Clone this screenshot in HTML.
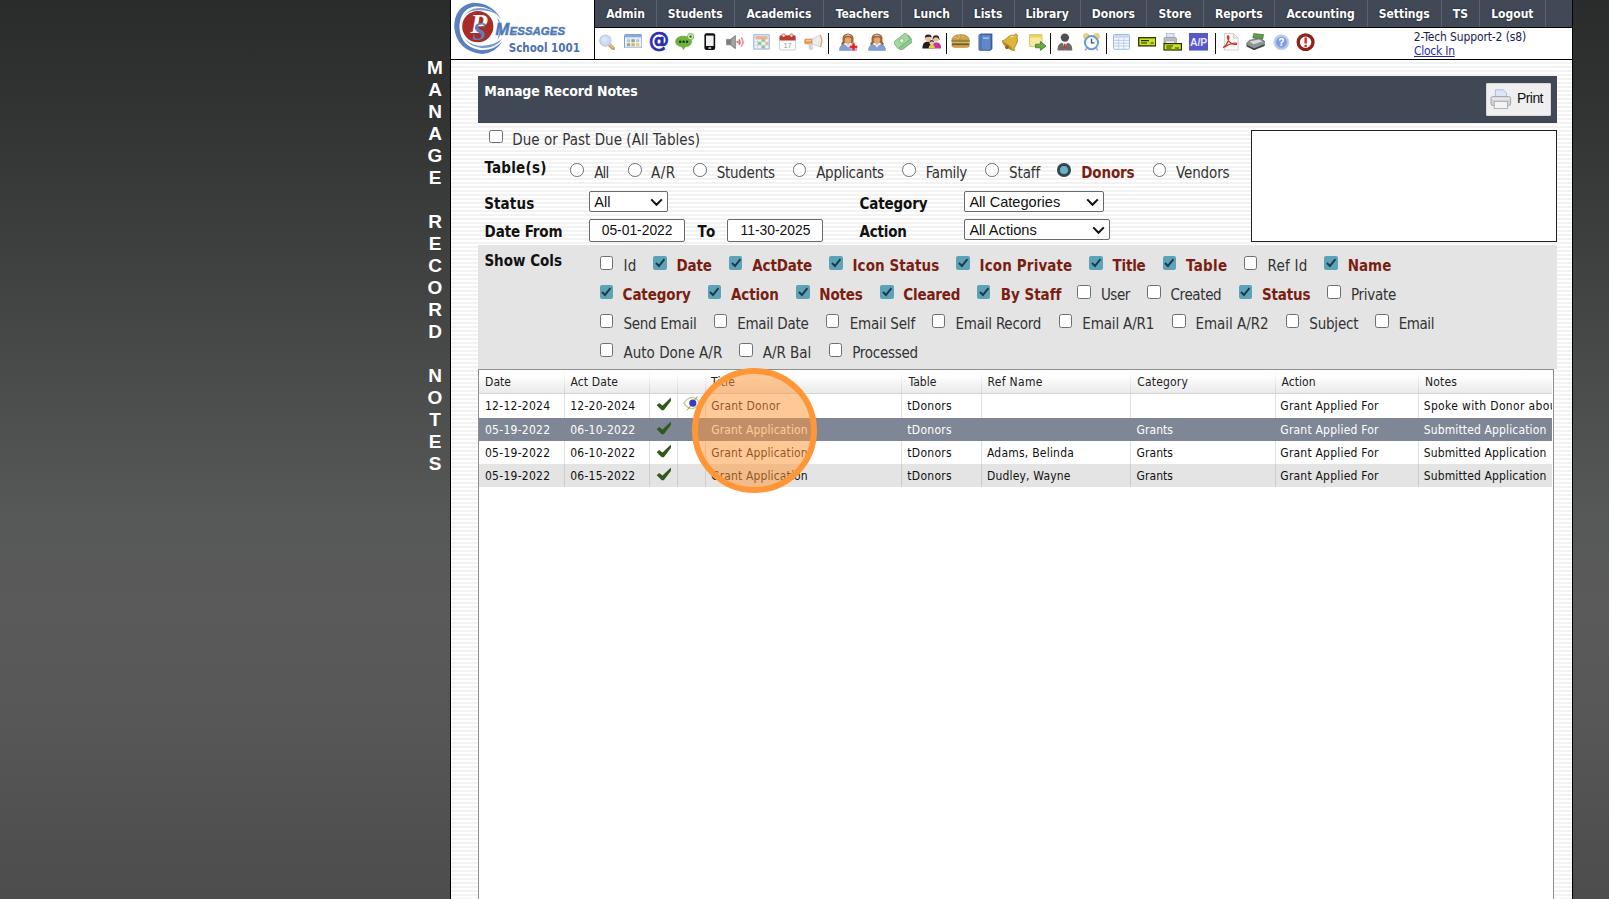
<!DOCTYPE html>
<html lang="en"><head><meta charset="utf-8"><title>Manage Record Notes</title>
<style>
html,body{margin:0;padding:0}
body{width:1609px;height:899px;overflow:hidden;position:relative;font-family:"DejaVu Sans Condensed","Liberation Sans",sans-serif;
background:linear-gradient(to bottom,#2a2b2b 0,#303131 90px,#3e3f3f 250px,#4c4d4d 400px,#575858 520px,#5a5a5a 610px,#575757 720px,#505050 830px,#4d4d4d 899px)}
.t{position:absolute;white-space:nowrap}
.vt{position:absolute;left:420px;width:30px;text-align:center;color:#fff;font:bold 19px/22px "Liberation Sans",sans-serif}
#page{position:absolute;left:450px;top:0;width:1121px;height:899px;border-left:1px solid #000;border-right:1px solid #000;
background:repeating-linear-gradient(to bottom,#fff 0,#fff 2px,#f2f2f2 2px,#f2f2f2 4px)}
#hdr{position:absolute;left:451px;top:0;width:1121px;height:59px;background:#fff;border-bottom:1px solid #000}
#logo{position:absolute;left:451px;top:0;width:143px;height:59px;border-right:1px solid #000;overflow:hidden}
#nav{position:absolute;left:595px;top:0;width:977px;height:27px;background:#414856;border-bottom:1px solid #000}
.ni{position:absolute;top:0;height:27px;border-right:1px solid #5a616f;color:#fff;font-weight:bold;font-size:12px;line-height:28px;text-align:center;text-shadow:0 0 2px #1a1e28}
#tool{position:absolute;left:595px;top:28px;width:977px;height:30px}
#tool svg{position:absolute}
.sp{position:absolute;top:5px;width:1.5px;height:21px;background:#111}
#tbar{position:absolute;left:478px;top:76px;width:1079px;height:46.7px;background:#414855}
#print{position:absolute;left:1485.5px;top:82.7px;width:65px;height:33.5px;background:#efefef;border-radius:2px;box-shadow:inset 0 0 0 1px #d9d9d9}
#print svg{position:absolute;left:4.6px;top:6.4px}
.cb{position:absolute;width:11.4px;height:11.4px;border:1px solid #6f6f6f;border-radius:2.5px;background:#fff}
.cb.on{border:0;width:13.4px;height:13.4px;background:#5da3b7;border-radius:2px}
.cb svg{position:absolute;left:1.5px;top:2px}
.rb{position:absolute;width:11.6px;height:11.6px;border:1px solid #6f6f6f;border-radius:50%;background:#fff}
.rb.on{width:7.6px;height:7.6px;border:3px solid #2f4954;background:#6cb1c3}
.sel{position:absolute;box-sizing:border-box;border:1px solid #6a6a6a;border-radius:2px;background:#fff}
.inp{position:absolute;box-sizing:border-box;border:1px solid #6a6a6a;border-radius:2px;background:#fff}
#ta{position:absolute;left:1251px;top:129.5px;width:304px;height:110.5px;border:1px solid #222;background:#fff}
#cols{position:absolute;left:478px;top:245.2px;width:1079px;height:123.8px;background:#e4e4e4}
#grid{position:absolute;left:478px;top:369px;width:1074px;height:540px;border:1px solid #8f8f8f;background:#fff}
#gh{position:absolute;background:linear-gradient(to bottom,#fff 0,#fdfdfd 35%,#f3f3f3 65%,#ebebeb 100%);border-bottom:1px solid #d6d6d6}
.gr{position:absolute;left:479px;width:1073px;background:#fff}
.gr.alt{background:#e4e4e4}
.gr.selr{background:#7f8796}
.gs{position:absolute;width:1px;background:rgba(170,170,170,.38)}
.gs.h{background:linear-gradient(to bottom,rgba(255,255,255,.9),rgba(200,200,200,.7))}
.ck{position:absolute}
#circle{position:absolute;left:692px;top:368px;width:113px;height:113px;border:6px solid #ff9739;border-radius:50%;background:rgba(255,150,56,.52)}
</style></head>
<body>
<span class="vt" style="top:57px">M</span><span class="vt" style="top:79px">A</span><span class="vt" style="top:101px">N</span><span class="vt" style="top:123px">A</span><span class="vt" style="top:145px">G</span><span class="vt" style="top:167px">E</span><span class="vt" style="top:211px">R</span><span class="vt" style="top:233px">E</span><span class="vt" style="top:255px">C</span><span class="vt" style="top:277px">O</span><span class="vt" style="top:299px">R</span><span class="vt" style="top:321px">D</span><span class="vt" style="top:365px">N</span><span class="vt" style="top:387px">O</span><span class="vt" style="top:409px">T</span><span class="vt" style="top:431px">E</span><span class="vt" style="top:453px">S</span>
<div id="page"></div>
<div id="hdr"></div>
<div id="logo"><svg width="143" height="59" viewBox="451 0 143 59" style="position:absolute;left:0;top:0"><path d="M501 19 Q492 3 473 2.8 Q454.5 6 454.2 27 Q456.5 51 482 54 Q496 53 502.5 41 Q494 51 480 50 Q460.5 47 459.4 27 Q460 9.5 474.5 6.6 Q490 5 501 19Z" fill="#5b80bf"/><path d="M498.5 15 Q487 5.8 473.5 8.8 Q462 12.6 461 26 Q461.4 12 475 10.4 Q488 9 498.5 15Z" fill="#7a9ad0"/><path d="M502.5 38.5 Q496 48.4 482.5 48.2 Q470 46.8 464.6 39 Q472 46 482.4 45.8 Q495 45 502.5 38.5Z" fill="#7a9ad0"/><path d="M496.6 17 Q501.4 22.6 501.4 28.5 Q501.4 34.6 497.4 39.6 Q499.6 34 499.6 28.5 Q499.6 22.6 496.6 17Z" fill="#6f90c9"/><circle cx="477.8" cy="26.6" r="15.6" fill="#a92c28"/><text x="470.4" y="33" font-family="Liberation Serif,serif" font-style="italic" font-weight="bold" font-size="27.5" fill="#fff">P</text><text x="472.4" y="39.6" font-family="Liberation Serif,serif" font-style="italic" font-weight="bold" font-size="25" fill="#5b80bf">S</text><text x="495.5" y="35.4" font-family="Liberation Sans,sans-serif" font-style="italic" font-weight="bold" font-size="16.5" fill="#4f79ba" stroke="#4f79ba" stroke-width=".5">M</text><text x="509.6" y="35.4" font-family="Liberation Sans,sans-serif" font-style="italic" font-weight="bold" font-size="11.6" fill="#4f79ba" stroke="#4f79ba" stroke-width=".45" textLength="55.5" lengthAdjust="spacingAndGlyphs">ESSAGES</text><text x="508.7" y="52.2" font-family="DejaVu Sans Condensed,Liberation Sans,sans-serif" font-weight="bold" font-size="12" fill="#4a70b0" textLength="71.3" lengthAdjust="spacingAndGlyphs">School 1001</text></svg></div>
<div id="nav"><span class="ni" style="left:0.0px;width:61.0px">Admin</span><span class="ni" style="left:61.4px;width:77.7px">Students</span><span class="ni" style="left:139.5px;width:88.8px">Academics</span><span class="ni" style="left:228.7px;width:77.6px">Teachers</span><span class="ni" style="left:306.7px;width:60.2px">Lunch</span><span class="ni" style="left:367.3px;width:51.5px">Lists</span><span class="ni" style="left:419.2px;width:65.7px">Library</span><span class="ni" style="left:485.3px;width:66.2px">Donors</span><span class="ni" style="left:551.9px;width:56.3px">Store</span><span class="ni" style="left:608.6px;width:70.4px">Reports</span><span class="ni" style="left:679.4px;width:92.3px">Accounting</span><span class="ni" style="left:772.1px;width:74.2px">Settings</span><span class="ni" style="left:846.7px;width:37.4px">TS</span><span class="ni" style="left:884.5px;width:65.7px">Logout</span></div>
<div id="tool"><svg style="left:3.7px;top:5.5px" width="16.6" height="16.0" viewBox="0 0 16.6 16.0"><path d="M10 10.4 L14.2 14.4" stroke="#c8a662" stroke-width="3.6" stroke-linecap="round"/><path d="M10.4 10 L14 13.4" stroke="#e3cf9a" stroke-width="1.1" stroke-linecap="round"/><circle cx="6.4" cy="6.6" r="5.6" fill="#cfdaf1" stroke="#b9c8e6" stroke-width="1.2"/><circle cx="5.6" cy="5.6" r="2.6" fill="#dde6f6"/></svg><svg style="left:28.6px;top:6.0px" width="18.4" height="14.4" viewBox="0 0 18.4 14.4"><rect x="0.5" y="0.5" width="17.4" height="13.6" rx="1" fill="#f2f6fc" stroke="#7f9dce"/><rect x="1" y="1" width="16.4" height="2.4" fill="#8aa8da"/><rect x="1" y="3.2" width="16.4" height="1" fill="#c5d6f0"/><rect x="1" y="12.6" width="16.4" height="1.2" fill="#b4c8ea"/><rect x="2.8" y="5.2" width="3.4" height="3" fill="#aec5e8"/><rect x="7.4" y="5.2" width="3.4" height="3" fill="#8fa872"/><rect x="12" y="5.2" width="3.4" height="3" fill="#aecbe8"/><rect x="2.8" y="9.2" width="3.4" height="3" fill="#90b47c"/><rect x="7.4" y="9.2" width="3.4" height="3" fill="#e3a674"/><rect x="12" y="9.2" width="3.4" height="3" fill="#ecc972"/></svg><svg style="left:52.9px;top:3.0px" width="22.1" height="22.0" viewBox="0 0 22.1 22.0"><text x="11" y="15.8" text-anchor="middle" font-family="DejaVu Sans,Liberation Sans,sans-serif" font-weight="bold" font-size="20.4" fill="#2b2eae" stroke="#2b2eae" stroke-width=".7">@</text></svg><svg style="left:80.3px;top:4.5px" width="19.3" height="17.0" viewBox="0 0 19.3 17.0"><path d="M8.2 3.2 C3.5 3.2 0.6 5.6 0.6 8.6 C0.6 11.4 3.2 13.4 6.8 13.8 L8.6 16.4 L10.2 13.8 C14.2 13.5 16.6 11.4 16.6 8.6 C16.6 5.6 13.4 3.2 8.2 3.2Z" fill="#6db33c" stroke="#5a9a30" stroke-width=".6"/><circle cx="5.2" cy="8.8" r="1.2" fill="#1d3510"/><circle cx="8.6" cy="8.8" r="1.2" fill="#1d3510"/><circle cx="12" cy="8.8" r="1.2" fill="#1d3510"/><circle cx="15.6" cy="3.6" r="3.1" fill="#d9ecc8" stroke="#6db33c" stroke-width="1"/><circle cx="15.6" cy="3.6" r="1.2" fill="#2f5a1c"/></svg><svg style="left:109.0px;top:5.2px" width="11.8" height="17.4" viewBox="0 0 11.8 17.4"><rect x="0.4" y="0.3" width="10.8" height="16.8" rx="2" fill="#111"/><rect x="2" y="2.6" width="7.6" height="10.4" fill="#f2f2f2"/><rect x="4.3" y="14.3" width="3" height="1.5" rx=".5" fill="#ddd"/></svg><svg style="left:131.3px;top:6.6px" width="19.3" height="14.4" viewBox="0 0 19.3 14.4"><path d="M0.6 4.4 H4.4 L9.4 0.4 V13.8 L4.4 9.8 H0.6Z" fill="#7d7f80" stroke="#666869" stroke-width=".6"/><path d="M5.4 4.6 L8.8 1.8 V12.4 L5.4 9.6Z" fill="#a4a6a7"/><circle cx="11.6" cy="7.1" r="1.1" fill="#d4545a"/><path d="M13 4.4 Q15 7.1 13 9.8" fill="none" stroke="#d9626a" stroke-width="1.5"/><path d="M15.2 2.6 Q18.8 7.1 15.2 11.6" fill="none" stroke="#e58e94" stroke-width="1.6"/></svg><svg style="left:158.2px;top:6.0px" width="17.0" height="15.8" viewBox="0 0 17.0 15.8"><rect x="0.7" y="0.7" width="15.6" height="14.4" rx="1" fill="#f3f6fd" stroke="#b3c0ec" stroke-width="1.5"/><rect x="2.4" y="2.2" width="12.2" height="3.2" fill="#eeb27e"/><path d="M1 7.8 H16 M1 11.2 H16 M4.6 4.8 V15 M8.4 4.8 V15 M12.2 4.8 V15" stroke="#c3d3ee" stroke-width=".9"/><rect x="5" y="8.2" width="3" height="2.6" fill="#8cc47c"/><rect x="8.8" y="5.2" width="3" height="2.4" fill="#8cc47c"/><rect x="8.8" y="11.6" width="3" height="2.8" fill="#8cc47c"/><rect x="12.6" y="8.2" width="3" height="2.6" fill="#f0b27a"/></svg><svg style="left:183.9px;top:5.0px" width="17.3" height="17.6" viewBox="0 0 17.3 17.6"><rect x="0.6" y="2.4" width="15.9" height="14.6" rx="1.4" fill="#fdfdfd" stroke="#c9c9c9" stroke-width=".9"/><path d="M0.6 7.4 V3.8 Q0.6 2.4 2 2.4 H15.1 Q16.5 2.4 16.5 3.8 V7.4Z" fill="#bd3b2a"/><circle cx="4.6" cy="2.6" r="1.7" fill="#f3e6e4" stroke="#a8342a" stroke-width=".7"/><circle cx="12.5" cy="2.6" r="1.7" fill="#f3e6e4" stroke="#a8342a" stroke-width=".7"/><text x="8.6" y="14.6" text-anchor="middle" font-family="Liberation Sans,sans-serif" font-size="7.6" fill="#9a9a9a">17</text></svg><svg style="left:209.0px;top:6.2px" width="19.6" height="16.8" viewBox="0 0 19.6 16.8"><path d="M7 5.4 L16.4 1 Q18.6 7 16.4 13 L7 9.6Z" fill="#ececec" stroke="#c4c4c4" stroke-width=".7"/><path d="M16.2 1 Q19.6 7 16.2 13" fill="none" stroke="#e9a56a" stroke-width="1.3"/><path d="M1 5.2 H8 V9.8 H1 Q0.2 7.5 1 5.2Z" fill="#ef9a4c" stroke="#d07e32" stroke-width=".6"/><path d="M4.6 9.8 H7.8 L8.8 15 Q7 16.4 5.4 15Z" fill="#d9d9d9" stroke="#bdbdbd" stroke-width=".5"/><rect x="2" y="6" width="5" height="1.2" fill="#f9cfa3"/></svg><span class="sp" style="left:232.9px"></span><svg style="left:243.7px;top:4.8px" width="19.0" height="18.1" viewBox="0 0 19.0 18.1"><path d="M3.6 8.6 Q2.2 1.2 9 0.6 Q15.8 1.2 14.4 8.6 Q16.6 10.4 15.4 12.8 Q13 12.2 12.4 10 H5.6 Q5 12.2 2.6 12.8 Q1.4 10.4 3.6 8.6Z" fill="#a7602f"/><path d="M5 3.4 Q9 -0.4 13 3.4 Q9 2 5 3.4Z" fill="#c9c4c4"/><ellipse cx="9" cy="7" rx="3.3" ry="4" fill="#dba878"/><path d="M5.4 5.6 Q6 3 9 3.2 Q12 3 12.6 5.6 Q11 4.2 9 4.4 Q7 4.2 5.4 5.6Z" fill="#8f4d26"/><path d="M0.4 17.4 Q0.4 12.4 5.2 11.6 L9 13.2 L12.8 11.6 Q17.6 12.4 17.6 17.4Z" fill="#7f9fd8" stroke="#6f8fca" stroke-width=".5"/><path d="M6.6 11.4 L9 14.4 L11.4 11.4 L9 10.4Z" fill="#f3f3f3"/><path d="M7.6 10.6 L9 12.6 L10.4 10.6Z" fill="#dba878"/><path d="M13 10 H16 V12.4 H18.6 V15.4 H16 V17.9 H13 V15.4 H10.4 V12.4 H13Z" fill="#d9282a" stroke="#fff" stroke-width=".5"/></svg><svg style="left:272.6px;top:4.8px" width="19.0" height="18.1" viewBox="0 0 19.0 18.1"><path d="M3.6 8.6 Q2.2 1.2 9 0.6 Q15.8 1.2 14.4 8.6 Q16.6 10.4 15.4 12.8 Q13 12.2 12.4 10 H5.6 Q5 12.2 2.6 12.8 Q1.4 10.4 3.6 8.6Z" fill="#a7602f"/><path d="M5 3.4 Q9 -0.4 13 3.4 Q9 2 5 3.4Z" fill="#c9c4c4"/><ellipse cx="9" cy="7" rx="3.3" ry="4" fill="#dba878"/><path d="M5.4 5.6 Q6 3 9 3.2 Q12 3 12.6 5.6 Q11 4.2 9 4.4 Q7 4.2 5.4 5.6Z" fill="#8f4d26"/><path d="M0.4 17.4 Q0.4 12.4 5.2 11.6 L9 13.2 L12.8 11.6 Q17.6 12.4 17.6 17.4Z" fill="#7f9fd8" stroke="#6f8fca" stroke-width=".5"/><path d="M6.6 11.4 L9 14.4 L11.4 11.4 L9 10.4Z" fill="#f3f3f3"/><path d="M7.6 10.6 L9 12.6 L10.4 10.6Z" fill="#dba878"/></svg><svg style="left:298.9px;top:5.2px" width="18.1" height="17.2" viewBox="0 0 18.1 17.2"><g transform="rotate(-38 9 8.6)"><rect x="1.6" y="6.6" width="15.6" height="8" fill="#8cc88a" stroke="#68a866" stroke-width=".7"/><rect x="0.8" y="3.2" width="15.6" height="8" fill="#a5d6a2" stroke="#68a866" stroke-width=".7"/><circle cx="8.6" cy="7.2" r="2.2" fill="#e3f3e2" stroke="#68a866" stroke-width=".6"/></g></svg><svg style="left:326.8px;top:5.8px" width="19.6" height="15.4" viewBox="0 0 19.6 15.4"><circle cx="6.2" cy="4" r="3.2" fill="#e9c19c"/><path d="M2.8 3.8 Q3 0.2 6.4 0.4 Q9.6 0.4 9.6 3.6 Q7.6 1.8 2.8 3.8Z" fill="#2a2320"/><path d="M0.4 14.6 Q0.4 8.6 4.4 7.8 H8.4 Q11.6 8.6 11.6 14.6Z" fill="#1e1e1e"/><circle cx="14" cy="4.8" r="3" fill="#e9c19c"/><path d="M10.6 6.6 Q10 1.2 14 1.2 Q18 1.2 17.4 6.6 Q16.6 3.4 14 3.2 Q11.4 3.4 10.6 6.6Z" fill="#3a2a22"/><path d="M9.6 14.6 Q9.8 9 13 8.4 H15.6 Q19 9 19.2 14.6Z" fill="#c4349a"/><circle cx="9.8" cy="8.8" r="2.4" fill="#eccaa8"/><path d="M7.4 8.4 Q7.6 6 9.8 6 Q12 6 12.2 8.4 Q9.8 6.8 7.4 8.4Z" fill="#4a3526"/><path d="M6.6 14.6 Q6.8 11.4 8.6 11 H11 Q12.8 11.4 13 14.6Z" fill="#e6cf3a"/></svg><span class="sp" style="left:350.7px"></span><svg style="left:356.2px;top:6.2px" width="19.3" height="13.8" viewBox="0 0 19.3 13.8"><path d="M0.8 6.2 Q1.2 0.6 9.6 0.6 Q18 0.6 18.4 6.2Z" fill="#cda246" stroke="#a98030" stroke-width=".5"/><path d="M3 3.4 H5 M7 2.2 H9 M11 2.6 H13 M14 4.2 H15.6 M6 4.4 H7.6" stroke="#ead9a0" stroke-width=".7"/><path d="M0.4 6 H18.8 V7.8 H0.4Z" fill="#7d9434"/><rect x="0.8" y="7.6" width="17.6" height="1" fill="#c9402c"/><rect x="0.8" y="8.5" width="17.6" height=".9" fill="#eccb42"/><rect x="0.8" y="9.3" width="17.6" height="1.8" fill="#6b4a1e"/><path d="M0.8 11 H18.4 Q18.4 13.4 15.6 13.4 H3.6 Q0.8 13.4 0.8 11Z" fill="#cda246" stroke="#a98030" stroke-width=".5"/></svg><svg style="left:383.0px;top:5.2px" width="15.0" height="17.6" viewBox="0 0 15.0 17.6"><path d="M1.6 1.6 L3 0.4 H14.4 V15.8 L13 17.2 H1.6Z" fill="#3d5c9c"/><rect x="1" y="1.6" width="12" height="15.6" rx=".8" fill="#6189c9" stroke="#41609f" stroke-width="1"/><rect x="2.4" y="2" width="1.2" height="14.8" fill="#4a70b4"/><rect x="5" y="4.4" width="6" height="1.5" fill="#a9c0e6"/></svg><svg style="left:407.4px;top:5.0px" width="18.1" height="17.9" viewBox="0 0 18.1 17.9"><g transform="rotate(38 9 9)"><path d="M9 -0.6 Q10.8 -0.6 10.6 1.6 Q14.6 3.2 14.8 9 Q15 12.6 17.4 14.4 H0.6 Q3 12.6 3.2 9 Q3.4 3.2 7.4 1.6 Q7.2 -0.6 9 -0.6Z" fill="#dcb638" stroke="#a98420" stroke-width=".8"/><ellipse cx="9" cy="14.4" rx="6.4" ry="1.7" fill="#b8902a"/><circle cx="9" cy="15.6" r="1.9" fill="#8a6a1c"/><path d="M5.6 5.4 Q6.2 3.6 8 3" stroke="#f4e08c" stroke-width="1.1" fill="none"/></g></svg><svg style="left:434.3px;top:6.0px" width="17.7" height="17.0" viewBox="0 0 17.7 17.0"><path d="M0.6 0.6 H13 V12.4 H0.6Z" fill="#f7e9a0" stroke="#d6bd5a" stroke-width=".9"/><rect x="0.9" y="0.9" width="11.8" height="2.6" fill="#ecd064"/><path d="M6.6 10.2 H11.4 V7.6 L17 12 L11.4 16.4 V13.8 H6.6Z" fill="#6aaa48" stroke="#3f7a2a" stroke-width=".9"/></svg><span class="sp" style="left:454.9px"></span><svg style="left:462.3px;top:5.2px" width="15.9" height="17.6" viewBox="0 0 15.9 17.6"><circle cx="7.9" cy="4.6" r="4.2" fill="#4f4f4f"/><path d="M0.4 17.4 Q0.4 11 4.8 9.8 L7.9 11.4 L11 9.8 Q15.4 11 15.4 17.4Z" fill="#6b6b6b"/><path d="M6.2 10.6 L7.9 17.4 L9.6 10.6 L7.9 9.8Z" fill="#f2f2f2"/><path d="M7.2 10.8 H8.6 L9 15 L7.9 17 L6.8 15Z" fill="#cf2e26"/></svg><svg style="left:487.7px;top:4.9px" width="17.1" height="17.9" viewBox="0 0 17.1 17.9"><circle cx="3.4" cy="3.4" r="2.8" fill="#f3d873" stroke="#d2b04a" stroke-width=".6"/><circle cx="13.6" cy="3.4" r="2.8" fill="#f3d873" stroke="#d2b04a" stroke-width=".6"/><path d="M3.6 15.4 L2.2 17.4 M13.4 15.4 L14.8 17.4" stroke="#9a9a9a" stroke-width="1.4"/><circle cx="8.5" cy="9.6" r="6.6" fill="#f7fafe" stroke="#6c9bd9" stroke-width="2"/><path d="M8.5 5.8 V9.8 H11.4" fill="none" stroke="#37527a" stroke-width="1.3"/></svg><span class="sp" style="left:510.5px"></span><svg style="left:518.0px;top:6.0px" width="17.2" height="15.9" viewBox="0 0 17.2 15.9"><rect x="0.5" y="0.5" width="16" height="14.8" rx=".8" fill="#f5f9fe" stroke="#9db8e4"/><rect x="1.2" y="1.2" width="14.6" height="2.6" fill="#c3d6f2"/><path d="M1 6.4 H16 M1 9.2 H16 M1 12 H16 M5.6 4 V15 M10.8 4 V15" stroke="#b4c9ea" stroke-width=".9"/></svg><svg style="left:542.8px;top:8.8px" width="18.4" height="9.8" viewBox="0 0 18.4 9.8"><rect x="0.7" y="0.7" width="17" height="8.2" fill="#c9e21e" stroke="#2b3208" stroke-width="1.3"/><path d="M3 3.6 H11 M3 6 H9 M12.6 6 H15.6" stroke="#2b3208" stroke-width="1.1"/></svg><svg style="left:567.7px;top:5.2px" width="19.3" height="17.6" viewBox="0 0 19.3 17.6"><rect x="3.4" y="0.6" width="7.6" height="4.4" fill="#dfe9f6" stroke="#9fb2cc" stroke-width=".7"/><rect x="1" y="4.4" width="12.4" height="6.6" rx="1" fill="#b9bcc0" stroke="#8c8f93" stroke-width=".7"/><rect x="2.6" y="8" width="9" height="3.6" fill="#eee" stroke="#9a9a9a" stroke-width=".5"/><rect x="1" y="10.6" width="17.4" height="6.4" fill="#c9e21e" stroke="#2b3208" stroke-width="1.2"/><path d="M3.4 13 H10 M3.4 15 H8.4 M12 15 H16" stroke="#2b3208" stroke-width="1"/></svg><svg style="left:593.8px;top:5.2px" width="19.2" height="17.6" viewBox="0 0 19.2 17.6"><rect x="0" y="0" width="19.2" height="17.6" fill="#5558c8"/><text x="9.6" y="13" text-anchor="middle" font-family="Liberation Sans,sans-serif" font-weight="bold" font-size="11" fill="#e6e6ff" textLength="17.4" lengthAdjust="spacingAndGlyphs">A/P</text></svg><span class="sp" style="left:619.5px"></span><svg style="left:626.8px;top:5.0px" width="17.1" height="17.8" viewBox="0 0 17.1 17.8"><path d="M2.4 0.5 H11.4 L16.2 5.2 V17.1 H2.4Z" fill="#fbfbfb" stroke="#c8c8c8" stroke-width=".8"/><path d="M11.4 0.5 V5.2 H16.2Z" fill="#e4e4e4" stroke="#c8c8c8" stroke-width=".6"/><path d="M1.2 14.6 Q5.4 11.6 6.8 5.6 Q7.2 2.8 6 2.8 Q4.8 3 6 6.4 Q8 11 13.6 11.6 Q15.6 11.2 14.2 10.2 Q10 9.4 1.2 14.6Z" fill="none" stroke="#d13426" stroke-width="1.3"/></svg><svg style="left:651.2px;top:5.2px" width="19.3" height="17.6" viewBox="0 0 19.3 17.6"><path d="M7.6 0.6 L17.6 1.6 L16.8 6 L6.8 5Z" fill="#5f9e46" stroke="#3d6b2c" stroke-width=".6"/><path d="M3.2 7.4 L13.6 5 L18.4 8 L18.4 12.6 L8 16.8 L0.8 13 L0.8 10Z" fill="#8d9494" stroke="#5a6060" stroke-width=".7"/><path d="M3.6 8.4 L13 6.4 L16.4 8.6 L7.4 11.2Z" fill="#d5d9d9"/><path d="M0.8 12.6 L8 16.2 L18.4 12" fill="none" stroke="#3f4545" stroke-width="1.4"/></svg><svg style="left:678.0px;top:5.6px" width="17.0" height="16.6" viewBox="0 0 17.0 16.6"><circle cx="8.4" cy="8.3" r="7.6" fill="#b4c6ea" stroke="#cfdaf0" stroke-width="1"/><circle cx="8.4" cy="8.3" r="5.4" fill="#7f9edb"/><text x="8.4" y="12" text-anchor="middle" font-family="Liberation Sans,sans-serif" font-weight="bold" font-size="10" fill="#fff">?</text></svg><svg style="left:700.6px;top:4.6px" width="19.4" height="18.4" viewBox="0 0 19.4 18.4"><circle cx="9.6" cy="9.2" r="7.4" fill="#fff" stroke="#8c241a" stroke-width="3.3"/><rect x="8.5" y="4.4" width="2.3" height="6.2" fill="#c8281e"/><rect x="8.5" y="11.8" width="2.3" height="2.2" fill="#c8281e"/></svg></div>
<div id="tbar"></div>
<div id="print"><svg width="22" height="21" viewBox="0 0 22 21"><path d="M5.4 0.8 H13 L16.4 4 V8.6 H5.4Z" fill="#dbe7f7" stroke="#9fb3d0" stroke-width=".8"/><rect x="1" y="7.6" width="19.6" height="9" rx="2" fill="#d2d4d8" stroke="#9b9ea4" stroke-width=".9"/><rect x="4.2" y="12.4" width="13.2" height="7.2" fill="#f4f4f4" stroke="#a6a6a6" stroke-width=".8"/><rect x="2" y="8.6" width="17.6" height="2" fill="#e9eaec"/></svg></div>
<span class="cb" style="left:489.2px;top:130.0px"></span>
<span class="rb" style="left:570.4px;top:163.0px"></span>
<span class="rb" style="left:628.0px;top:163.0px"></span>
<span class="rb" style="left:693.2px;top:163.0px"></span>
<span class="rb" style="left:792.8px;top:163.0px"></span>
<span class="rb" style="left:902.0px;top:163.0px"></span>
<span class="rb" style="left:985.2px;top:163.0px"></span>
<span class="rb on" style="left:1057.2px;top:163.0px"></span>
<span class="rb" style="left:1152.8px;top:163.0px"></span>
<div class="sel" style="left:589.1px;top:191.0px;width:78.9px;height:20.8px"><svg width="13" height="9" viewBox="0 0 13 9" style="position:absolute;right:4.2px;top:5.6px"><path d="M1.2 1.4 L6.5 6.8 L11.8 1.4" fill="none" stroke="#111" stroke-width="2"/></svg></div>
<div class="sel" style="left:964.3px;top:191.0px;width:139.4px;height:20.8px"><svg width="13" height="9" viewBox="0 0 13 9" style="position:absolute;right:4.2px;top:5.6px"><path d="M1.2 1.4 L6.5 6.8 L11.8 1.4" fill="none" stroke="#111" stroke-width="2"/></svg></div>
<div class="sel" style="left:964.3px;top:219.0px;width:145.4px;height:20.5px"><svg width="13" height="9" viewBox="0 0 13 9" style="position:absolute;right:4.2px;top:5.6px"><path d="M1.2 1.4 L6.5 6.8 L11.8 1.4" fill="none" stroke="#111" stroke-width="2"/></svg></div>
<div class="inp" style="left:589.1px;top:219.2px;width:95.8px;height:22.5px"></div>
<div class="inp" style="left:727.2px;top:219.2px;width:96.3px;height:22.5px"></div>
<div id="ta"></div>
<div id="cols"></div>
<span class="cb" style="left:599.8px;top:256.3px"></span>
<span class="cb on" style="left:653.2px;top:256.3px"><svg width="10.4" height="9.4" viewBox="0 0 11 9.4" preserveAspectRatio="none"><path d="M1 5 L4.2 8 L10 1.2" fill="none" stroke="#1e3846" stroke-width="2"/></svg></span>
<span class="cb on" style="left:729.0px;top:256.3px"><svg width="10.4" height="9.4" viewBox="0 0 11 9.4" preserveAspectRatio="none"><path d="M1 5 L4.2 8 L10 1.2" fill="none" stroke="#1e3846" stroke-width="2"/></svg></span>
<span class="cb on" style="left:829.2px;top:256.3px"><svg width="10.4" height="9.4" viewBox="0 0 11 9.4" preserveAspectRatio="none"><path d="M1 5 L4.2 8 L10 1.2" fill="none" stroke="#1e3846" stroke-width="2"/></svg></span>
<span class="cb on" style="left:956.2px;top:256.3px"><svg width="10.4" height="9.4" viewBox="0 0 11 9.4" preserveAspectRatio="none"><path d="M1 5 L4.2 8 L10 1.2" fill="none" stroke="#1e3846" stroke-width="2"/></svg></span>
<span class="cb on" style="left:1089.2px;top:256.3px"><svg width="10.4" height="9.4" viewBox="0 0 11 9.4" preserveAspectRatio="none"><path d="M1 5 L4.2 8 L10 1.2" fill="none" stroke="#1e3846" stroke-width="2"/></svg></span>
<span class="cb on" style="left:1162.6px;top:256.3px"><svg width="10.4" height="9.4" viewBox="0 0 11 9.4" preserveAspectRatio="none"><path d="M1 5 L4.2 8 L10 1.2" fill="none" stroke="#1e3846" stroke-width="2"/></svg></span>
<span class="cb" style="left:1244.1px;top:256.3px"></span>
<span class="cb on" style="left:1324.2px;top:256.3px"><svg width="10.4" height="9.4" viewBox="0 0 11 9.4" preserveAspectRatio="none"><path d="M1 5 L4.2 8 L10 1.2" fill="none" stroke="#1e3846" stroke-width="2"/></svg></span>
<span class="cb on" style="left:599.8px;top:285.3px"><svg width="10.4" height="9.4" viewBox="0 0 11 9.4" preserveAspectRatio="none"><path d="M1 5 L4.2 8 L10 1.2" fill="none" stroke="#1e3846" stroke-width="2"/></svg></span>
<span class="cb on" style="left:707.9px;top:285.3px"><svg width="10.4" height="9.4" viewBox="0 0 11 9.4" preserveAspectRatio="none"><path d="M1 5 L4.2 8 L10 1.2" fill="none" stroke="#1e3846" stroke-width="2"/></svg></span>
<span class="cb on" style="left:796.2px;top:285.3px"><svg width="10.4" height="9.4" viewBox="0 0 11 9.4" preserveAspectRatio="none"><path d="M1 5 L4.2 8 L10 1.2" fill="none" stroke="#1e3846" stroke-width="2"/></svg></span>
<span class="cb on" style="left:880.2px;top:285.3px"><svg width="10.4" height="9.4" viewBox="0 0 11 9.4" preserveAspectRatio="none"><path d="M1 5 L4.2 8 L10 1.2" fill="none" stroke="#1e3846" stroke-width="2"/></svg></span>
<span class="cb on" style="left:977.1px;top:285.3px"><svg width="10.4" height="9.4" viewBox="0 0 11 9.4" preserveAspectRatio="none"><path d="M1 5 L4.2 8 L10 1.2" fill="none" stroke="#1e3846" stroke-width="2"/></svg></span>
<span class="cb" style="left:1077.3px;top:285.3px"></span>
<span class="cb" style="left:1147.4px;top:285.3px"></span>
<span class="cb on" style="left:1238.9px;top:285.3px"><svg width="10.4" height="9.4" viewBox="0 0 11 9.4" preserveAspectRatio="none"><path d="M1 5 L4.2 8 L10 1.2" fill="none" stroke="#1e3846" stroke-width="2"/></svg></span>
<span class="cb" style="left:1327.2px;top:285.3px"></span>
<span class="cb" style="left:599.8px;top:314.4px"></span>
<span class="cb" style="left:714.1px;top:314.4px"></span>
<span class="cb" style="left:826.1px;top:314.4px"></span>
<span class="cb" style="left:931.9px;top:314.4px"></span>
<span class="cb" style="left:1058.7px;top:314.4px"></span>
<span class="cb" style="left:1172.3px;top:314.4px"></span>
<span class="cb" style="left:1285.6px;top:314.4px"></span>
<span class="cb" style="left:1375.2px;top:314.4px"></span>
<span class="cb" style="left:599.8px;top:343.4px"></span>
<span class="cb" style="left:739.2px;top:343.4px"></span>
<span class="cb" style="left:828.7px;top:343.4px"></span>
<div id="grid"></div>
<div id="gh" style="left:479px;top:370px;width:1073px;height:22.6px"></div><div class="gr " style="top:394.0px;height:24.0px"></div><div class="gr selr" style="top:418.0px;height:22.6px"></div><div class="gr " style="top:440.6px;height:23.6px"></div><div class="gr alt" style="top:464.2px;height:23.3px"></div><div class="gs h" style="left:564.0px;top:371px;height:21.6px"></div><div class="gs" style="left:564.0px;top:394.0px;height:24.0px"></div><div class="gs" style="left:564.0px;top:440.6px;height:23.6px"></div><div class="gs" style="left:564.0px;top:464.2px;height:23.3px"></div><div class="gs h" style="left:649.0px;top:371px;height:21.6px"></div><div class="gs" style="left:649.0px;top:394.0px;height:24.0px"></div><div class="gs" style="left:649.0px;top:440.6px;height:23.6px"></div><div class="gs" style="left:649.0px;top:464.2px;height:23.3px"></div><div class="gs h" style="left:677.1px;top:371px;height:21.6px"></div><div class="gs" style="left:677.1px;top:394.0px;height:24.0px"></div><div class="gs" style="left:677.1px;top:440.6px;height:23.6px"></div><div class="gs" style="left:677.1px;top:464.2px;height:23.3px"></div><div class="gs h" style="left:704.9px;top:371px;height:21.6px"></div><div class="gs" style="left:704.9px;top:394.0px;height:24.0px"></div><div class="gs" style="left:704.9px;top:440.6px;height:23.6px"></div><div class="gs" style="left:704.9px;top:464.2px;height:23.3px"></div><div class="gs h" style="left:901.3px;top:371px;height:21.6px"></div><div class="gs" style="left:901.3px;top:394.0px;height:24.0px"></div><div class="gs" style="left:901.3px;top:440.6px;height:23.6px"></div><div class="gs" style="left:901.3px;top:464.2px;height:23.3px"></div><div class="gs h" style="left:980.9px;top:371px;height:21.6px"></div><div class="gs" style="left:980.9px;top:394.0px;height:24.0px"></div><div class="gs" style="left:980.9px;top:440.6px;height:23.6px"></div><div class="gs" style="left:980.9px;top:464.2px;height:23.3px"></div><div class="gs h" style="left:1130.1px;top:371px;height:21.6px"></div><div class="gs" style="left:1130.1px;top:394.0px;height:24.0px"></div><div class="gs" style="left:1130.1px;top:440.6px;height:23.6px"></div><div class="gs" style="left:1130.1px;top:464.2px;height:23.3px"></div><div class="gs h" style="left:1274.5px;top:371px;height:21.6px"></div><div class="gs" style="left:1274.5px;top:394.0px;height:24.0px"></div><div class="gs" style="left:1274.5px;top:440.6px;height:23.6px"></div><div class="gs" style="left:1274.5px;top:464.2px;height:23.3px"></div><div class="gs h" style="left:1418.3px;top:371px;height:21.6px"></div><div class="gs" style="left:1418.3px;top:394.0px;height:24.0px"></div><div class="gs" style="left:1418.3px;top:440.6px;height:23.6px"></div><div class="gs" style="left:1418.3px;top:464.2px;height:23.3px"></div>
<span class="ck" style="left:656px;top:396.4px"><svg width="16" height="14" viewBox="0 0 16 14"><path d="M0.7 8.2 L3.1 6 L6.5 8.6 L14.9 0.6 L14.9 4 L7.8 13.2 L5.7 13.2Z" fill="#33591a"/></svg></span>
<span class="ck" style="left:656px;top:420.4px"><svg width="16" height="14" viewBox="0 0 16 14"><path d="M0.7 8.2 L3.1 6 L6.5 8.6 L14.9 0.6 L14.9 4 L7.8 13.2 L5.7 13.2Z" fill="#33591a"/></svg></span>
<span class="ck" style="left:656px;top:443.4px"><svg width="16" height="14" viewBox="0 0 16 14"><path d="M0.7 8.2 L3.1 6 L6.5 8.6 L14.9 0.6 L14.9 4 L7.8 13.2 L5.7 13.2Z" fill="#33591a"/></svg></span>
<span class="ck" style="left:656px;top:466.4px"><svg width="16" height="14" viewBox="0 0 16 14"><path d="M0.7 8.2 L3.1 6 L6.5 8.6 L14.9 0.6 L14.9 4 L7.8 13.2 L5.7 13.2Z" fill="#33591a"/></svg></span>
<span style="position:absolute;left:682.5px;top:396px"><svg width="17" height="15" viewBox="0 0 17 15"><path d="M0.8 7.2 Q4.6 1.6 9.2 1.4 Q13.6 1.6 16.4 6.6 Q13 12.6 8.6 12.8 Q4.2 12.4 0.8 7.2Z" fill="#fdfdf6" stroke="#c9c98e" stroke-width="1.3"/><path d="M4.2 14.2 L14.4 0.4" stroke="#b07a62" stroke-width=".9"/><circle cx="9.8" cy="7.1" r="3.6" fill="#3b3cc2"/></svg></span>

<span class="t " id="t0" style="left:1413.8px;top:29.15px;font-size:12px;line-height:16px;color:#1c1c4e;letter-spacing:-0.123px;">2-Tech Support-2 (s8)</span>
<span class="t " id="t1" style="left:1414.0px;top:43.15px;font-size:12px;line-height:16px;color:#2a2aa0;letter-spacing:-0.257px;text-decoration:underline;">Clock In</span>
<span class="t " id="t2" style="left:484.3px;top:82.26px;font-size:14px;line-height:18px;font-weight:bold;color:#fff;letter-spacing:-0.122px;">Manage Record Notes</span>
<span class="t " id="t3" style="left:1517.0px;top:89.15px;font-size:14px;line-height:18px;color:#111;font-family:'Liberation Sans',sans-serif;letter-spacing:-0.574px;">Print</span>
<span class="t " id="t4" style="left:512.3px;top:129.81px;font-size:15px;line-height:20px;color:#333;letter-spacing:0.036px;">Due or Past Due (All Tables)</span>
<span class="t " id="t5" style="left:484.4px;top:157.81px;font-size:15px;line-height:20px;font-weight:bold;color:#111;letter-spacing:0.259px;">Table(s)</span>
<span class="t " id="t6" style="left:594.3px;top:162.81px;font-size:15px;line-height:20px;color:#333;letter-spacing:-0.917px;">All</span>
<span class="t " id="t7" style="left:651.0px;top:162.81px;font-size:15px;line-height:20px;color:#333;letter-spacing:0.522px;">A/R</span>
<span class="t " id="t8" style="left:716.7px;top:162.81px;font-size:15px;line-height:20px;color:#333;letter-spacing:-0.267px;">Students</span>
<span class="t " id="t9" style="left:816.2px;top:162.81px;font-size:15px;line-height:20px;color:#333;letter-spacing:-0.293px;">Applicants</span>
<span class="t " id="t10" style="left:925.8px;top:162.81px;font-size:15px;line-height:20px;color:#333;letter-spacing:-0.359px;">Family</span>
<span class="t " id="t11" style="left:1009.0px;top:162.81px;font-size:15px;line-height:20px;color:#333;letter-spacing:-0.105px;">Staff</span>
<span class="t " id="t12" style="left:1081.2px;top:162.81px;font-size:15px;line-height:20px;font-weight:bold;color:#7a1e12;letter-spacing:-0.133px;">Donors</span>
<span class="t " id="t13" style="left:1176.0px;top:162.81px;font-size:15px;line-height:20px;color:#333;letter-spacing:-0.121px;">Vendors</span>
<span class="t " id="t14" style="left:484.2px;top:193.81px;font-size:15px;line-height:20px;font-weight:bold;color:#111;letter-spacing:0.125px;">Status</span>
<span class="t " id="t15" style="left:484.6px;top:221.81px;font-size:15px;line-height:20px;font-weight:bold;color:#111;letter-spacing:-0.109px;">Date From</span>
<span class="t " id="t16" style="left:697.5px;top:221.81px;font-size:15px;line-height:20px;font-weight:bold;color:#111;letter-spacing:1.200px;">To</span>
<span class="t " id="t17" style="left:859.4px;top:193.81px;font-size:15px;line-height:20px;font-weight:bold;color:#111;letter-spacing:-0.117px;">Category</span>
<span class="t " id="t18" style="left:859.4px;top:221.81px;font-size:15px;line-height:20px;font-weight:bold;color:#111;letter-spacing:-0.181px;">Action</span>
<span class="t " id="t19" style="left:594.2px;top:193.44px;font-size:14.6px;line-height:19px;color:#111;font-family:'Liberation Sans',sans-serif;">All</span>
<span class="t " id="t20" style="left:969.4px;top:193.44px;font-size:14.6px;line-height:19px;color:#111;font-family:'Liberation Sans',sans-serif;">All Categories</span>
<span class="t " id="t21" style="left:969.4px;top:221.44px;font-size:14.6px;line-height:19px;color:#111;font-family:'Liberation Sans',sans-serif;">All Actions</span>
<span class="t " id="t22" style="left:601.7px;top:221.10px;font-size:13.85px;line-height:18px;color:#111;font-family:'Liberation Sans',sans-serif;">05-01-2022</span>
<span class="t " id="t23" style="left:740.6px;top:221.10px;font-size:13.85px;line-height:18px;color:#111;font-family:'Liberation Sans',sans-serif;">11-30-2025</span>
<span class="t " id="t24" style="left:484.4px;top:250.81px;font-size:15px;line-height:20px;font-weight:bold;color:#111;letter-spacing:0.001px;">Show Cols</span>
<span class="t " id="t25" style="left:623.5px;top:255.81px;font-size:15px;line-height:20px;color:#333;letter-spacing:0.153px;">Id</span>
<span class="t " id="t26" style="left:676.6px;top:255.81px;font-size:15px;line-height:20px;font-weight:bold;color:#7a1e12;letter-spacing:-0.207px;">Date</span>
<span class="t " id="t27" style="left:752.2px;top:255.81px;font-size:15px;line-height:20px;font-weight:bold;color:#7a1e12;letter-spacing:-0.121px;">ActDate</span>
<span class="t " id="t28" style="left:852.5px;top:255.81px;font-size:15px;line-height:20px;font-weight:bold;color:#7a1e12;letter-spacing:0.083px;">Icon Status</span>
<span class="t " id="t29" style="left:979.6px;top:255.81px;font-size:15px;line-height:20px;font-weight:bold;color:#7a1e12;letter-spacing:0.129px;">Icon Private</span>
<span class="t " id="t30" style="left:1112.6px;top:255.81px;font-size:15px;line-height:20px;font-weight:bold;color:#7a1e12;letter-spacing:-0.241px;">Title</span>
<span class="t " id="t31" style="left:1186.1px;top:255.81px;font-size:15px;line-height:20px;font-weight:bold;color:#7a1e12;letter-spacing:0.318px;">Table</span>
<span class="t " id="t32" style="left:1267.5px;top:255.81px;font-size:15px;line-height:20px;color:#333;letter-spacing:0.241px;">Ref Id</span>
<span class="t " id="t33" style="left:1347.8px;top:255.81px;font-size:15px;line-height:20px;font-weight:bold;color:#7a1e12;letter-spacing:-0.042px;">Name</span>
<span class="t " id="t34" style="left:622.6px;top:284.81px;font-size:15px;line-height:20px;font-weight:bold;color:#7a1e12;letter-spacing:-0.117px;">Category</span>
<span class="t " id="t35" style="left:731.0px;top:284.81px;font-size:15px;line-height:20px;font-weight:bold;color:#7a1e12;letter-spacing:-0.121px;">Action</span>
<span class="t " id="t36" style="left:819.3px;top:284.81px;font-size:15px;line-height:20px;font-weight:bold;color:#7a1e12;letter-spacing:-0.180px;">Notes</span>
<span class="t " id="t37" style="left:903.3px;top:284.81px;font-size:15px;line-height:20px;font-weight:bold;color:#7a1e12;letter-spacing:-0.178px;">Cleared</span>
<span class="t " id="t38" style="left:1000.7px;top:284.81px;font-size:15px;line-height:20px;font-weight:bold;color:#7a1e12;letter-spacing:-0.014px;">By Staff</span>
<span class="t " id="t39" style="left:1100.9px;top:284.81px;font-size:15px;line-height:20px;color:#333;letter-spacing:-0.455px;">User</span>
<span class="t " id="t40" style="left:1170.5px;top:284.81px;font-size:15px;line-height:20px;color:#333;letter-spacing:-0.365px;">Created</span>
<span class="t " id="t41" style="left:1262.0px;top:284.81px;font-size:15px;line-height:20px;font-weight:bold;color:#7a1e12;letter-spacing:-0.175px;">Status</span>
<span class="t " id="t42" style="left:1351.0px;top:284.81px;font-size:15px;line-height:20px;color:#333;letter-spacing:-0.286px;">Private</span>
<span class="t " id="t43" style="left:623.4px;top:313.81px;font-size:15px;line-height:20px;color:#333;letter-spacing:-0.270px;">Send Email</span>
<span class="t " id="t44" style="left:737.2px;top:313.81px;font-size:15px;line-height:20px;color:#333;letter-spacing:-0.265px;">Email Date</span>
<span class="t " id="t45" style="left:849.7px;top:313.81px;font-size:15px;line-height:20px;color:#333;letter-spacing:-0.179px;">Email Self</span>
<span class="t " id="t46" style="left:955.5px;top:313.81px;font-size:15px;line-height:20px;color:#333;letter-spacing:-0.224px;">Email Record</span>
<span class="t " id="t47" style="left:1082.3px;top:313.81px;font-size:15px;line-height:20px;color:#333;letter-spacing:-0.152px;">Email A/R1</span>
<span class="t " id="t48" style="left:1195.5px;top:313.81px;font-size:15px;line-height:20px;color:#333;letter-spacing:-0.030px;">Email A/R2</span>
<span class="t " id="t49" style="left:1309.3px;top:313.81px;font-size:15px;line-height:20px;color:#333;letter-spacing:-0.211px;">Subject</span>
<span class="t " id="t50" style="left:1398.8px;top:313.81px;font-size:15px;line-height:20px;color:#333;letter-spacing:-0.463px;">Email</span>
<span class="t " id="t51" style="left:623.4px;top:342.81px;font-size:15px;line-height:20px;color:#333;letter-spacing:0.028px;">Auto Done A/R</span>
<span class="t " id="t52" style="left:762.8px;top:342.81px;font-size:15px;line-height:20px;color:#333;letter-spacing:-0.036px;">A/R Bal</span>
<span class="t " id="t53" style="left:852.2px;top:342.81px;font-size:15px;line-height:20px;color:#333;letter-spacing:-0.252px;">Processed</span>
<span class="t " id="t54" style="left:485.0px;top:373.85px;font-size:12px;line-height:16px;color:#222;letter-spacing:0.062px;">Date</span>
<span class="t " id="t55" style="left:570.4px;top:373.85px;font-size:12px;line-height:16px;color:#222;letter-spacing:0.132px;">Act Date</span>
<span class="t " id="t56" style="left:711.0px;top:373.85px;font-size:12px;line-height:16px;color:#222;letter-spacing:0.223px;">Title</span>
<span class="t " id="t57" style="left:908.5px;top:373.85px;font-size:12px;line-height:16px;color:#222;letter-spacing:0.066px;">Table</span>
<span class="t " id="t58" style="left:987.4px;top:373.85px;font-size:12px;line-height:16px;color:#222;letter-spacing:0.330px;">Ref Name</span>
<span class="t " id="t59" style="left:1137.3px;top:373.85px;font-size:12px;line-height:16px;color:#222;letter-spacing:0.170px;">Category</span>
<span class="t " id="t60" style="left:1281.5px;top:373.85px;font-size:12px;line-height:16px;color:#222;letter-spacing:0.041px;">Action</span>
<span class="t " id="t61" style="left:1425.0px;top:373.85px;font-size:12px;line-height:16px;color:#222;letter-spacing:0.203px;">Notes</span>
<span class="t " id="t62" style="left:485.0px;top:397.85px;font-size:12px;line-height:16px;color:#111;letter-spacing:0.252px;">12-12-2024</span>
<span class="t " id="t63" style="left:570.2px;top:397.85px;font-size:12px;line-height:16px;color:#111;letter-spacing:0.252px;">12-20-2024</span>
<span class="t " id="t64" style="left:711.2px;top:397.85px;font-size:12px;line-height:16px;color:#111;letter-spacing:0.227px;">Grant Donor</span>
<span class="t " id="t65" style="left:907.3px;top:397.85px;font-size:12px;line-height:16px;color:#111;letter-spacing:0.274px;">tDonors</span>
<span class="t " id="t66" style="left:1280.3px;top:397.85px;font-size:12px;line-height:16px;color:#111;letter-spacing:0.215px;">Grant Applied For</span>
<span class="t " id="t67" style="left:1423.7px;top:397.85px;font-size:12px;line-height:16px;color:#111;letter-spacing:0.361px;width:128.3px;overflow:hidden;">Spoke with Donor about</span>
<span class="t " id="t68" style="left:485.0px;top:421.85px;font-size:12px;line-height:16px;color:#fff;letter-spacing:0.252px;">05-19-2022</span>
<span class="t " id="t69" style="left:570.2px;top:421.85px;font-size:12px;line-height:16px;color:#fff;letter-spacing:0.252px;">06-10-2022</span>
<span class="t " id="t70" style="left:711.2px;top:421.85px;font-size:12px;line-height:16px;color:#fff;letter-spacing:0.141px;">Grant Application</span>
<span class="t " id="t71" style="left:907.3px;top:421.85px;font-size:12px;line-height:16px;color:#fff;letter-spacing:0.274px;">tDonors</span>
<span class="t " id="t72" style="left:1136.6px;top:421.85px;font-size:12px;line-height:16px;color:#fff;letter-spacing:0.055px;">Grants</span>
<span class="t " id="t73" style="left:1280.3px;top:421.85px;font-size:12px;line-height:16px;color:#fff;letter-spacing:0.215px;">Grant Applied For</span>
<span class="t " id="t74" style="left:1423.7px;top:421.85px;font-size:12px;line-height:16px;color:#fff;letter-spacing:0.140px;width:128.3px;overflow:hidden;">Submitted Application</span>
<span class="t " id="t75" style="left:485.0px;top:444.85px;font-size:12px;line-height:16px;color:#111;letter-spacing:0.252px;">05-19-2022</span>
<span class="t " id="t76" style="left:570.2px;top:444.85px;font-size:12px;line-height:16px;color:#111;letter-spacing:0.252px;">06-10-2022</span>
<span class="t " id="t77" style="left:711.2px;top:444.85px;font-size:12px;line-height:16px;color:#111;letter-spacing:0.141px;">Grant Application</span>
<span class="t " id="t78" style="left:907.3px;top:444.85px;font-size:12px;line-height:16px;color:#111;letter-spacing:0.274px;">tDonors</span>
<span class="t " id="t79" style="left:986.9px;top:444.85px;font-size:12px;line-height:16px;color:#111;letter-spacing:0.230px;">Adams, Belinda</span>
<span class="t " id="t80" style="left:1136.6px;top:444.85px;font-size:12px;line-height:16px;color:#111;letter-spacing:0.055px;">Grants</span>
<span class="t " id="t81" style="left:1280.3px;top:444.85px;font-size:12px;line-height:16px;color:#111;letter-spacing:0.215px;">Grant Applied For</span>
<span class="t " id="t82" style="left:1423.7px;top:444.85px;font-size:12px;line-height:16px;color:#111;letter-spacing:0.140px;width:128.3px;overflow:hidden;">Submitted Application</span>
<span class="t " id="t83" style="left:485.0px;top:467.85px;font-size:12px;line-height:16px;color:#111;letter-spacing:0.252px;">05-19-2022</span>
<span class="t " id="t84" style="left:570.2px;top:467.85px;font-size:12px;line-height:16px;color:#111;letter-spacing:0.252px;">06-15-2022</span>
<span class="t " id="t85" style="left:711.2px;top:467.85px;font-size:12px;line-height:16px;color:#111;letter-spacing:0.141px;">Grant Application</span>
<span class="t " id="t86" style="left:907.3px;top:467.85px;font-size:12px;line-height:16px;color:#111;letter-spacing:0.274px;">tDonors</span>
<span class="t " id="t87" style="left:986.9px;top:467.85px;font-size:12px;line-height:16px;color:#111;letter-spacing:0.191px;">Dudley, Wayne</span>
<span class="t " id="t88" style="left:1136.6px;top:467.85px;font-size:12px;line-height:16px;color:#111;letter-spacing:0.055px;">Grants</span>
<span class="t " id="t89" style="left:1280.3px;top:467.85px;font-size:12px;line-height:16px;color:#111;letter-spacing:0.215px;">Grant Applied For</span>
<span class="t " id="t90" style="left:1423.7px;top:467.85px;font-size:12px;line-height:16px;color:#111;letter-spacing:0.140px;width:128.3px;overflow:hidden;">Submitted Application</span>
<div id="circle"></div>
</body></html>
